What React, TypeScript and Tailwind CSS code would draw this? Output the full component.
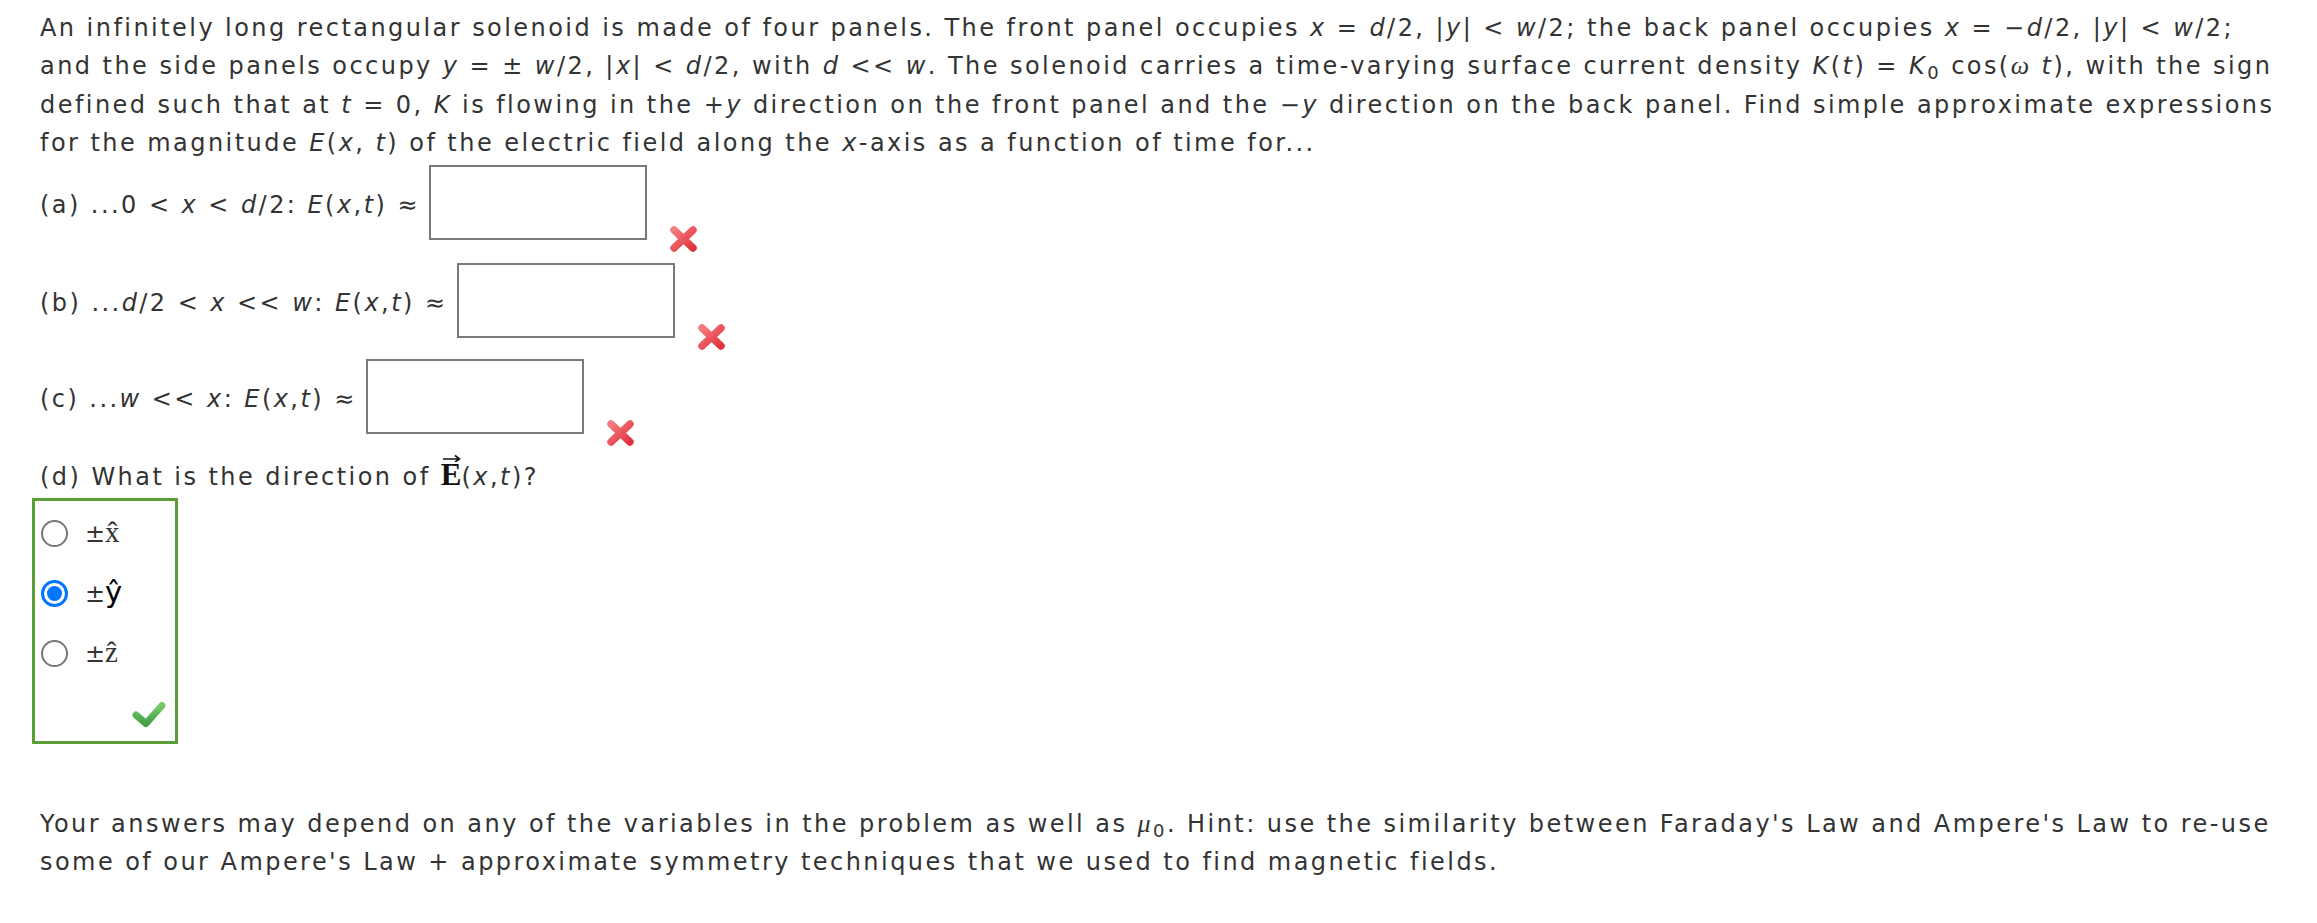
import React from 'react';

const sans = { fontFamily: '"DejaVu Sans", Verdana, sans-serif' };

const XMark = () => (
  <svg width="29" height="28" viewBox="0 0 29 28" className="shrink-0">
    <defs>
      <linearGradient id="xg" x1="0" y1="0" x2="1" y2="1">
        <stop offset="0" stopColor="#f47b80" />
        <stop offset="1" stopColor="#e2323c" />
      </linearGradient>
    </defs>
    <path d="M5 5 L24 23 M24 5 L5 23" stroke="url(#xg)" strokeWidth="7.5" strokeLinecap="round" fill="none" />
  </svg>
);

const Check = () => (
  <svg width="34" height="27" viewBox="0 0 34 27">
    <defs>
      <linearGradient id="cg" x1="0" y1="0" x2="0" y2="1">
        <stop offset="0" stopColor="#7acb6e" />
        <stop offset="1" stopColor="#44a046" />
      </linearGradient>
    </defs>
    <path d="M4 14 L14 22.5 L30 4.5" stroke="url(#cg)" strokeWidth="7" strokeLinecap="round" strokeLinejoin="round" fill="none" />
  </svg>
);

const Serif = ({ children, className = '' }: { children: React.ReactNode; className?: string }) => (
  <span className={className} style={{ fontFamily: '"Liberation Serif", "Times New Roman", serif' }}>
    {children}
  </span>
);

const Row = ({ label, height }: { label: React.ReactNode; height: string }) => (
  <div className={`flex items-start ${height}`}>
    <span className="mt-[21px] whitespace-nowrap">{label}</span>
    <div className="ml-[9px] h-[75px] w-[218px] shrink-0 border-2 border-[#7a7a7a] bg-white" />
    <div className="ml-[22px] mt-[60px]">
      <XMark />
    </div>
  </div>
);

const Radio = ({ checked }: { checked?: boolean }) =>
  checked ? (
    <span className="flex h-[27px] w-[27px] items-center justify-center rounded-full border-[3px] border-[#0075ff] bg-white">
      <span className="h-[15px] w-[15px] rounded-full bg-[#0075ff]" />
    </span>
  ) : (
    <span className="h-[27px] w-[27px] rounded-full border-2 border-[#767676] bg-white" />
  );

export default function App() {
  return (
    <div
      className="min-h-screen bg-white pl-[40px] pt-[9px] text-[24px] leading-[38.4px] tracking-[2.45px] text-[#333]"
      style={sans}
    >
      <p className="whitespace-nowrap">
        An infinitely long rectangular solenoid is made of four panels. The front panel occupies <i>x</i> = <i>d</i>/2, |<i>y</i>| &lt; <i>w</i>/2; the back panel occupies <i>x</i> = −<i>d</i>/2, |<i>y</i>| &lt; <i>w</i>/2;
        <br />
        and the side panels occupy <i>y</i> = ± <i>w</i>/2, |<i>x</i>| &lt; <i>d</i>/2, with <i>d</i> &lt;&lt; <i>w</i>. The solenoid carries a time-varying surface current density <i>K</i>(<i>t</i>) = <i>K</i><sub>0</sub> cos(<Serif className="italic text-[26px]">ω</Serif> <i>t</i>), with the sign
        <br />
        defined such that at <i>t</i> = 0, <i>K</i> is flowing in the +<i>y</i> direction on the front panel and the −<i>y</i> direction on the back panel. Find simple approximate expressions
        <br />
        for the magnitude <i>E</i>(<i>x</i>, <i>t</i>) of the electric field along the <i>x</i>-axis as a function of time for...
      </p>

      <div className="mt-[2px]">
        <Row height="h-[98px]" label={<>(a) ...0 &lt; <i>x</i> &lt; <i>d</i>/2: <i>E</i>(<i>x</i>,<i>t</i>) ≈</>} />
        <Row height="h-[96px]" label={<>(b) ...<i>d</i>/2 &lt; <i>x</i> &lt;&lt; <i>w</i>: <i>E</i>(<i>x</i>,<i>t</i>) ≈</>} />
        <Row height="h-[97px]" label={<>(c) ...<i>w</i> &lt;&lt; <i>x</i>: <i>E</i>(<i>x</i>,<i>t</i>) ≈</>} />
      </div>

      <p className="whitespace-nowrap">
        (d) What is the direction of{' '}
        <span className="relative inline-block tracking-normal">
          <Serif className="text-[31px] font-bold text-[#111]">E</Serif>
          <svg className="absolute left-[1px] top-[-3px]" width="19" height="9" viewBox="0 0 19 9">
            <path d="M1 6 H17 M13 2.5 L17.5 6 L13 9" stroke="#111" strokeWidth="1.6" fill="none" />
          </svg>
        </span>
        (<i>x</i>,<i>t</i>)?
      </p>

      <div className="ml-[-8px] mt-[2px] flex h-[246px] w-[146px] flex-col border-[3px] border-[#5c9e38] pl-[6px] pt-[2px] tracking-normal">
        <div className="flex h-[60px] items-center gap-[17px]">
          <Radio />
          <span>
            ±<Serif className="text-[29px]">x̂</Serif>
          </span>
        </div>
        <div className="flex h-[60px] items-center gap-[17px]">
          <Radio checked />
          <span>
            ±<span className="text-[29px] text-black">ŷ</span>
          </span>
        </div>
        <div className="flex h-[60px] items-center gap-[17px]">
          <Radio />
          <span>
            ±<Serif className="text-[29px]">ẑ</Serif>
          </span>
        </div>
        <div className="ml-[91px] mt-[18px]">
          <Check />
        </div>
      </div>

      <p className="mt-[61px] whitespace-nowrap">
        Your answers may depend on any of the variables in the problem as well as <Serif className="italic text-[26px]">μ</Serif>
        <sub>0</sub>. Hint: use the similarity between Faraday's Law and Ampere's Law to re-use
        <br />
        some of our Ampere's Law + approximate symmetry techniques that we used to find magnetic fields.
      </p>
    </div>
  );
}
